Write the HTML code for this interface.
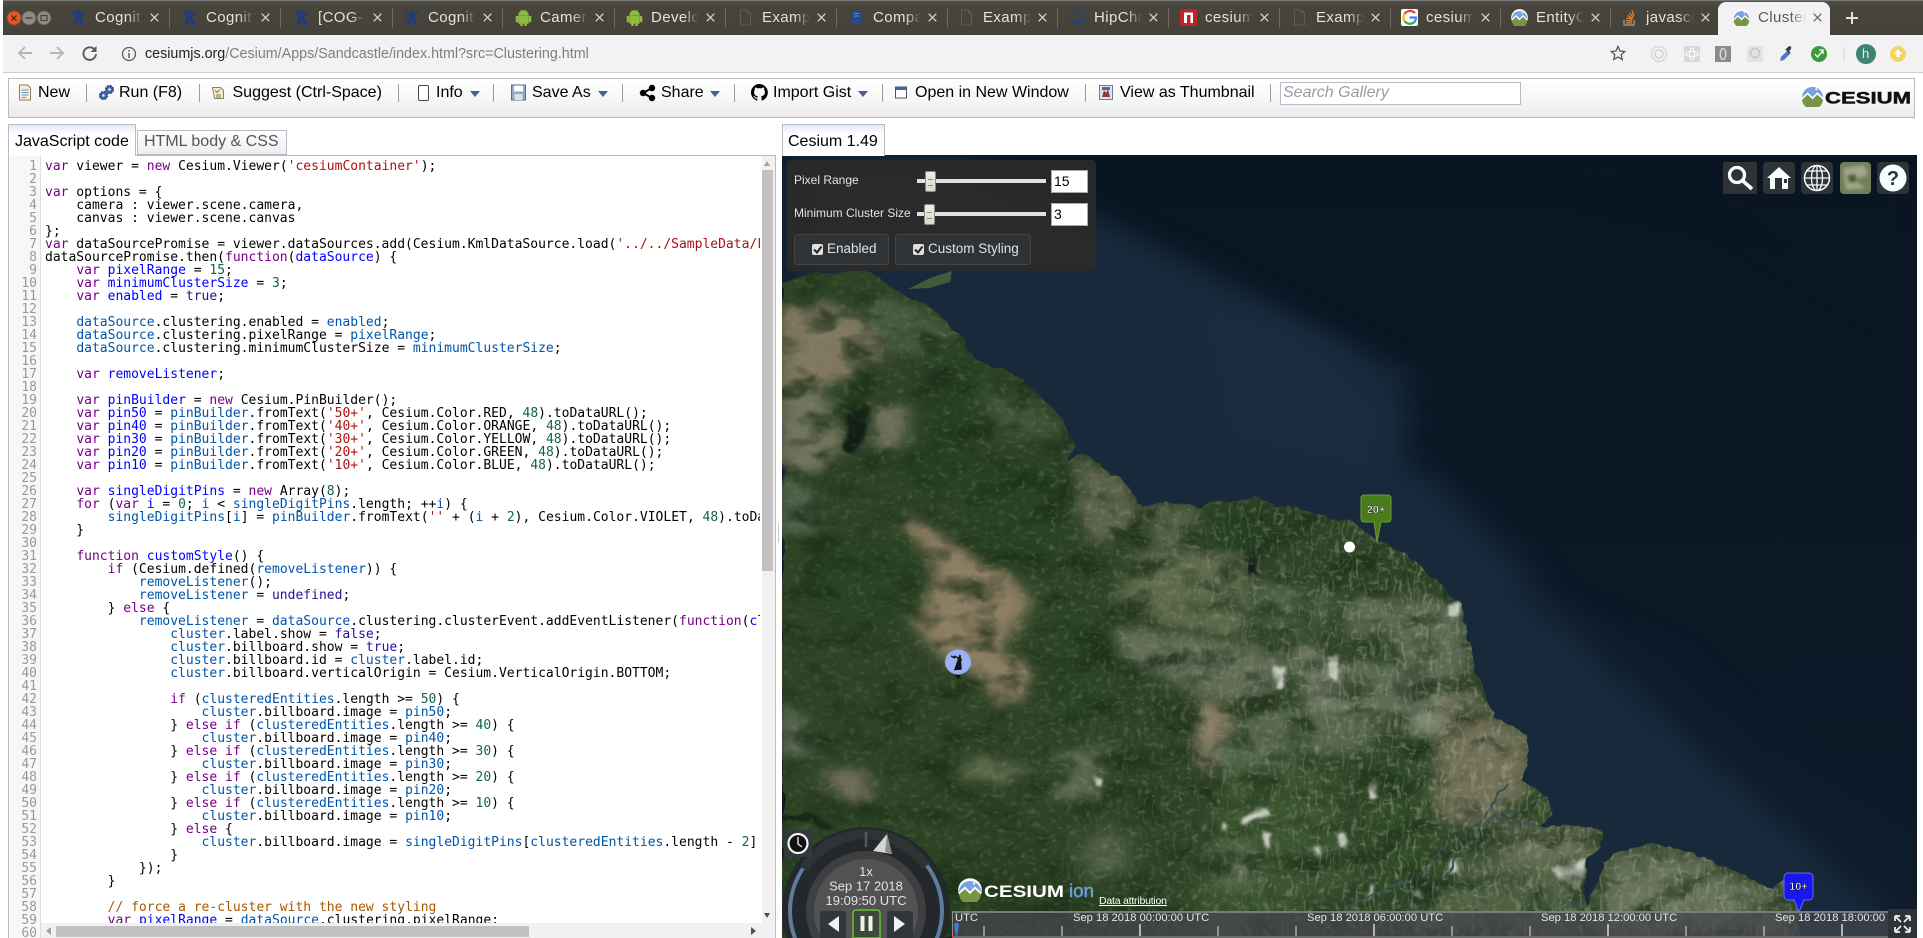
<!DOCTYPE html>
<html><head><meta charset="utf-8"><title>Cesium Sandcastle</title>
<style>
*{box-sizing:border-box}
html,body{margin:0;padding:0;width:1923px;height:938px;overflow:hidden;background:#fff;font-family:"Liberation Sans",sans-serif}
.a{position:absolute}
#tabbar{position:absolute;left:3px;top:0;width:1920px;height:35px;background:linear-gradient(#55524a,#47443c 20%,#45423a)}
.t{position:absolute;top:0;height:35px;width:111px;color:#e4e2dc;font-size:15px;letter-spacing:.4px}
.t svg.i{position:absolute;left:11px;top:9px;width:17px;height:17px}
.t span{position:absolute;left:36px;top:9px;width:48px;overflow:hidden;white-space:nowrap;line-height:18px;-webkit-mask-image:linear-gradient(to right,#000 68%,transparent);mask-image:linear-gradient(to right,#000 68%,transparent)}
.t svg.x{position:absolute;left:91px;top:13px;width:9px;height:9px}
.t i{position:absolute;right:0;top:8px;width:1px;height:20px;background:#6d6a62}
#addr{position:absolute;left:3px;top:35px;width:1920px;height:38px;background:#f2f2f2;border-bottom:1px solid #cdcdcd}
#tb{position:absolute;left:8px;top:78px;width:1907px;height:40px;border:1px solid #b5bcc7;background:linear-gradient(#fff,#f6f6f6 55%,#ebebeb)}
.tt{position:absolute;top:84px;font-size:16px;line-height:18px;color:#000;white-space:nowrap}
.sp{position:absolute;top:84px;width:1px;height:18px;background:#9b9b9b}
.ar{position:absolute;top:91px;width:0;height:0;border-left:5px solid transparent;border-right:5px solid transparent;border-top:6px solid #47628f}
.tab{position:absolute;font-size:16px;line-height:20px;white-space:nowrap;border:1px solid #b5bcc7}
#ed{position:absolute;left:8px;top:155px;width:768px;height:783px;border:1px solid #b5bcc7;border-bottom:0;background:#fff}
#gut{position:absolute;left:9px;top:156px;width:32px;height:782px;background:#f7f7f7;border-right:1px solid #ddd}
#nums{position:absolute;left:9px;top:160px;width:28px;height:778px;overflow:hidden;text-align:right;color:#999}
#nums,#code{font:13px/13px "DejaVu Sans Mono",monospace;white-space:pre;margin:0}
#clip{position:absolute;left:41px;top:156px;width:719px;height:767px;overflow:hidden}
#code{position:absolute;left:4px;top:4px;color:#000}
b{font-weight:400}
.k{color:#708}.d{color:#00f}.v{color:#05a}.s{color:#a11}.n{color:#164}.c{color:#a50}.u{color:#219}
.cb{position:absolute;background:#303336;border:1px solid #444;border-radius:3px;color:#edffff}
.lb{position:absolute;font-size:12px;color:#e2e2e2;line-height:16px;white-space:nowrap}
.th{position:absolute;width:11px;height:21px;background:linear-gradient(#efece6,#dcd8cf);border:1px solid #8d8a83;border-radius:2px}
.th:after{content:"";position:absolute;left:2px;top:7px;width:5px;height:5px;border-top:1px solid #888;border-bottom:1px solid #888}
.tr{position:absolute;left:917px;width:129px;height:4px;background:#e4e0d8}
.inp{position:absolute;left:1051px;width:37px;background:#fff;border:1px solid #aaa;color:#000;font-size:14px;padding-left:2px;line-height:21px}
.tl{position:absolute;top:911px;font-size:11.2px;line-height:15px;color:#e6e6e6;white-space:nowrap}
</style></head>
<body>

<svg width="0" height="0" style="position:absolute">
<defs>
<symbol id="jira" viewBox="0 0 17 17"><circle cx="8.5" cy="3.6" r="2.3" fill="#1d3d80"/><path d="M1.5 2.5 6 8 2.5 16h3.4L8.5 11l2.6 5h3.4L11 8l4.5-5.500-2-.8L9.7 6.500H7.3L3.5 1.700z" fill="#1d3d80"/></symbol>
<symbol id="and" viewBox="0 0 17 17"><path d="M3.5 6.500a5 5 0 0 1 10 0zM3.5 7.300h10v6.200a1 1 0 0 1-1 1h-1v2.500H9.500v-2.500h-2v2.500H5.500v-2.500h-1a1 1 0 0 1-1-1zM1 7.300h1.700v5.500H1zM14.300 7.300H16v5.500h-1.700zM5.500 .5l1.500 2.500M11.500 .5 10 3" fill="#8fbb3f" stroke="#8fbb3f" stroke-width=".6"/></symbol>
<symbol id="file" viewBox="0 0 17 17"><path d="M3.500 1h7l3 3v12h-10zM10.500 1v3h3" fill="none" stroke="#5f5c54"/></symbol>
<symbol id="comp" viewBox="0 0 17 17"><path d="M4 2.500Q8.500 .5 13 2.500V14Q8.500 16.500 4 14z" fill="#234a8e"/><path d="M6 4.500h5M6 7h5" stroke="#6e8fc2"/></symbol>
<symbol id="hip" viewBox="0 0 17 17"><circle cx="8.500" cy="8" r="6.500" fill="none" stroke="#27417c" stroke-width="1.800"/><path d="M5.500 10.500Q8.500 12.500 11.500 10.500M11 14l3 2" stroke="#27417c" stroke-width="1.500" fill="none"/></symbol>
<symbol id="npm" viewBox="0 0 17 17"><rect width="17" height="17" fill="#c12127"/><path d="M4 3.500h9V14h-2.500V6H7v8H4z" fill="#fff"/></symbol>
<symbol id="goog" viewBox="0 0 17 17"><rect width="17" height="17" rx="2" fill="#fff"/><path d="M14 4.200A6.500 6.500 0 0 0 3.500 5" fill="none" stroke="#ea4335" stroke-width="2.200"/><path d="M3.500 5a6.500 6.500 0 0 0 0 7" fill="none" stroke="#fbbc05" stroke-width="2.200"/><path d="M3.500 12A6.500 6.500 0 0 0 13.500 12.800" fill="none" stroke="#34a853" stroke-width="2.200"/><path d="M13.500 12.800c1-1 1.500-2.300 1.500-4.300H8.500" fill="none" stroke="#4285f4" stroke-width="2.200"/></symbol>
<symbol id="ces" viewBox="0 0 24 24"><circle cx="12" cy="12" r="11.800" fill="#fff"/><path d="M1 14A11 11 0 1 1 23 14z" fill="#78a3de"/><path d="M1 15.500 7 10l5 5 5-5 6 5.500A11 11 0 0 1 1 15.500z" fill="#7a9445"/><path d="M.8 15.500 7 9.800l5 5 5-5 6.200 5.700" fill="none" stroke="#fff" stroke-width="1.800"/><circle cx="16" cy="5.500" r="1.100" fill="#fff"/></symbol>
<symbol id="so" viewBox="0 0 17 17"><path d="M3 11v5h10v-5" fill="none" stroke="#a9a49a" stroke-width="1.200"/><path d="M5 14h6M5 11.500l6 .8M5.500 9l5.800 1.600M6.500 6.500l5.200 3M8.500 4l4 4.500M11 1.500l1.800 5.500" stroke="#e8822b" stroke-width="1.300" fill="none"/></symbol>
<symbol id="xx" viewBox="0 0 9 9"><path d="M.7.7l7.600 7.600M8.300.7.700 8.300" stroke="#d6d4ce" stroke-width="1.300" fill="none"/></symbol>
</defs>
</svg>

<!-- tab strip -->
<div id="tabbar"></div>
<div class="a" style="left:0;top:0;width:1923px;height:1px;background:#777"></div>
<svg class="a" style="left:5px;top:8px" width="48" height="20">
<circle cx="9" cy="10" r="7" fill="#e0582b" stroke="#8a4a30"/><path d="M6.500 7.500l5 5M11.500 7.500l-5 5" stroke="#57200e" stroke-width="1.200"/>
<circle cx="24" cy="10" r="7" fill="#8f8c84" stroke="#5b5951"/><path d="M20.500 10h7" stroke="#46443d" stroke-width="1.500"/>
<circle cx="39" cy="10" r="7" fill="#8f8c84" stroke="#5b5951"/><rect x="36" y="7.500" width="6" height="5" fill="none" stroke="#46443d" stroke-width="1.200"/>
</svg>
<div class="t" style="left:59px"><svg class="i"><use href="#jira"/></svg><span>Cognit</span><svg class="x"><use href="#xx"/></svg><i></i></div>
<div class="t" style="left:170px"><svg class="i"><use href="#jira"/></svg><span>Cognit</span><svg class="x"><use href="#xx"/></svg><i></i></div>
<div class="t" style="left:282px"><svg class="i"><use href="#jira"/></svg><span>[COG-1</span><svg class="x"><use href="#xx"/></svg><i></i></div>
<div class="t" style="left:392px"><svg class="i"><use href="#jira"/></svg><span>Cognit</span><svg class="x"><use href="#xx"/></svg><i></i></div>
<div class="t" style="left:504px"><svg class="i"><use href="#and"/></svg><span>Camera</span><svg class="x"><use href="#xx"/></svg><i></i></div>
<div class="t" style="left:615px"><svg class="i"><use href="#and"/></svg><span>Develo</span><svg class="x"><use href="#xx"/></svg><i></i></div>
<div class="t" style="left:726px"><svg class="i"><use href="#file"/></svg><span>Examp</span><svg class="x"><use href="#xx"/></svg><i></i></div>
<div class="t" style="left:837px"><svg class="i"><use href="#comp"/></svg><span>Compa</span><svg class="x"><use href="#xx"/></svg><i></i></div>
<div class="t" style="left:947px"><svg class="i"><use href="#file"/></svg><span>Examp</span><svg class="x"><use href="#xx"/></svg><i></i></div>
<div class="t" style="left:1058px"><svg class="i"><use href="#hip"/></svg><span>HipCha</span><svg class="x"><use href="#xx"/></svg><i></i></div>
<div class="t" style="left:1169px"><svg class="i"><use href="#npm"/></svg><span>cesium</span><svg class="x"><use href="#xx"/></svg><i></i></div>
<div class="t" style="left:1280px"><svg class="i"><use href="#file"/></svg><span>Examp</span><svg class="x"><use href="#xx"/></svg><i></i></div>
<div class="t" style="left:1390px"><svg class="i"><use href="#goog"/></svg><span>cesium</span><svg class="x"><use href="#xx"/></svg><i></i></div>
<div class="t" style="left:1500px"><svg class="i"><use href="#ces"/></svg><span>EntityC</span><svg class="x"><use href="#xx"/></svg><i></i></div>
<div class="t" style="left:1610px"><svg class="i"><use href="#so"/></svg><span>javascr</span><svg class="x"><use href="#xx"/></svg></div>
<div class="a" style="left:1718px;top:2px;width:112px;height:33px;background:#f2f2f2;border-radius:8px 8px 0 0"></div>
<div class="t" style="left:1722px;color:#5a5a5a"><svg class="i"><use href="#ces"/></svg><span>Cluster</span><svg class="x" viewBox="0 0 9 9"><path d="M.7.7l7.600 7.600M8.300.7.700 8.300" stroke="#666" stroke-width="1.300"/></svg></div>
<svg class="a" style="left:1845px;top:11px" width="14" height="14"><path d="M7 1v12M1 7h12" stroke="#e4e2dc" stroke-width="2"/></svg>

<!-- address bar -->
<div id="addr"></div>
<div class="a" style="left:0;top:0;width:3px;height:938px;background:#fff"></div>
<svg class="a" style="left:16px;top:44px" width="90" height="18">
<path d="M16 9H3M9 3 3 9l6 6" fill="none" stroke="#b6b6b6" stroke-width="1.900"/>
<path d="M34 9h13M41 3l6 6-6 6" fill="none" stroke="#b6b6b6" stroke-width="1.900"/>
<path d="M78.500 5.500A6.300 6.300 0 1 0 80 10" fill="none" stroke="#5a5a5a" stroke-width="1.900"/><path d="M80.500 2v6h-6z" fill="#5a5a5a"/>
</svg>
<svg class="a" style="left:121px;top:46px" width="16" height="16"><circle cx="8" cy="8" r="6.500" fill="none" stroke="#5c5c5c" stroke-width="1.300"/><path d="M8 7v5M8 4v1.600" stroke="#5c5c5c" stroke-width="1.500"/></svg>
<div class="a" style="left:145px;top:45px;font-size:14.3px;line-height:18px;color:#7a7f86;white-space:nowrap"><span style="color:#222">cesiumjs.org</span>/Cesium/Apps/Sandcastle/index.html?src=Clustering.html</div>
<svg class="a" style="left:1610px;top:45px" width="16" height="16"><path d="M8 1.500 10 6l4.800.5L11.200 9.700l1 4.800L8 12l-4.200 2.500 1-4.800L1.200 6.500 6 6z" fill="none" stroke="#555" stroke-width="1.300"/></svg>
<svg class="a" style="left:1650px;top:44px" width="260" height="20">
<circle cx="9" cy="10" r="7.500" fill="none" stroke="#d9d9d9" stroke-width="1.500"/><circle cx="9" cy="10" r="4" fill="none" stroke="#d0d0d0" stroke-width="1.500"/>
<rect x="34" y="2" width="16" height="16" fill="#d8d8d8"/><ellipse cx="42" cy="10" rx="6.500" ry="2.500" fill="none" stroke="#fff"/><ellipse cx="42" cy="10" rx="2.500" ry="6" fill="none" stroke="#fff"/>
<rect x="65" y="2" width="16" height="16" fill="#8a8a8a"/><ellipse cx="73" cy="10" rx="2.800" ry="5.500" fill="none" stroke="#d8d8d8" stroke-width="1.500"/>
<rect x="97" y="2" width="16" height="16" fill="#e4e4e4"/><circle cx="105" cy="9" r="4.500" fill="none" stroke="#c6c6c6" stroke-width="1.500"/>
<path d="M130 17l1-4 7-7 3 3-7 7z" fill="#5577cc"/><path d="M136 5l2-2c2-2 4 0 3 2l-2 2 1 1-1 1-4-4z" fill="#3a3a3a"/>
<circle cx="169" cy="10" r="8" fill="#3d9a3d"/><path d="M165 10l2.500 3 5-6M169 6h4v4" fill="none" stroke="#fff" stroke-width="1.300"/>
<path d="M194 3v14" stroke="#d3d3d3"/>
<circle cx="216" cy="10" r="10" fill="#3f8373"/>
<circle cx="248" cy="10" r="8" fill="#f4d469"/><path d="M248 5l4 5h-2.500v3h-3v-3H244z" fill="#fff"/>
</svg>
<div class="a" style="left:1862px;top:46px;color:#e6f0ee;font-size:13px;line-height:16px">h</div>

<!-- toolbar -->
<div id="tb"></div>
<svg class="a" style="left:18px;top:84px" width="14" height="17"><path d="M1.500 1h8l3 3v12h-11z" fill="#f6f1dc" stroke="#8d8157"/><path d="M3.500 6h7M3.500 8.500h7M3.500 11h7M3.500 13.500h5" stroke="#6b93cc"/></svg>
<div class="tt" style="left:38px">New</div><div class="sp" style="left:86px"></div>
<svg class="a" style="left:98px;top:84px" width="17" height="17"><circle cx="5.500" cy="11.500" r="3.800" fill="#3f68ad" stroke="#213f78" stroke-dasharray="2 1" stroke-width="1.600"/><circle cx="11.500" cy="5.500" r="3.800" fill="#3f68ad" stroke="#213f78" stroke-dasharray="2 1" stroke-width="1.600"/><circle cx="5.500" cy="11.500" r="1.200" fill="#fff"/><circle cx="11.500" cy="5.500" r="1.200" fill="#fff"/></svg>
<div class="tt" style="left:119px">Run (F8)</div><div class="sp" style="left:199px"></div>
<svg class="a" style="left:211px;top:85px" width="15" height="15"><path d="M1.500 2.500h8l3 3v8h-9z" fill="#f4eecf" stroke="#8b8256"/><path d="M4 5l2 2.500 3-3M5 10h5M5 12h5" stroke="#7f7a5a" fill="none"/></svg>
<div class="tt" style="left:232.5px">Suggest (Ctrl-Space)</div><div class="sp" style="left:398px"></div>
<svg class="a" style="left:417px;top:84px" width="13" height="18"><rect x="1.500" y="1.500" width="10" height="15" rx="1.500" fill="#fff" stroke="#444"/></svg>
<div class="tt" style="left:436px">Info</div><div class="ar" style="left:470px"></div><div class="sp" style="left:493px"></div>
<svg class="a" style="left:511px;top:84px" width="16" height="17"><rect x=".5" y="1" width="14" height="15" fill="#8ea9d0" stroke="#546d97"/><rect x="3" y="1.500" width="9" height="6" fill="#fff"/><rect x="3.500" y="10" width="8" height="6" fill="#e0e0e0"/></svg>
<div class="tt" style="left:532px">Save As</div><div class="ar" style="left:598px"></div><div class="sp" style="left:622px"></div>
<svg class="a" style="left:639px;top:84px" width="17" height="18"><path d="M13 4 4 9l9 5" fill="none" stroke="#000" stroke-width="2"/><circle cx="13" cy="4" r="3.200"/><circle cx="4" cy="9" r="3.200"/><circle cx="13" cy="14" r="3.200"/></svg>
<div class="tt" style="left:661px">Share</div><div class="ar" style="left:710px"></div><div class="sp" style="left:734px"></div>
<svg class="a" style="left:751px;top:84px" width="17" height="17" viewBox="0 0 16 16"><path d="M8 0a8 8 0 0 0-2.500 15.600c.4.100.5-.2.500-.4v-1.400c-2.200.5-2.700-1-2.700-1-.4-.9-.9-1.200-.9-1.200-.7-.5.100-.5.100-.5.800.1 1.200.8 1.200.8.700 1.200 1.900.9 2.300.7.100-.5.300-.9.500-1.100-1.800-.2-3.600-.9-3.600-4 0-.9.300-1.600.8-2.100-.1-.2-.4-1 .1-2.100 0 0 .7-.2 2.200.8a7.600 7.600 0 0 1 4 0c1.500-1 2.200-.8 2.200-.8.400 1.100.2 1.900.1 2.100.5.600.8 1.300.8 2.100 0 3.100-1.900 3.700-3.700 3.900.3.300.6.800.6 1.500v2.200c0 .2.100.5.600.4A8 8 0 0 0 8 0z"/></svg>
<div class="tt" style="left:773px">Import Gist</div><div class="ar" style="left:858px"></div><div class="sp" style="left:882px"></div>
<svg class="a" style="left:895px;top:86px" width="13" height="14"><rect x=".5" y="1" width="11" height="11" fill="#fff" stroke="#44576f"/><rect x="1" y="1" width="10" height="3" fill="#3a6aa8"/></svg>
<div class="tt" style="left:915px">Open in New Window</div><div class="sp" style="left:1085px"></div>
<svg class="a" style="left:1099px;top:85px" width="14" height="15"><rect x=".5" y=".5" width="13" height="14" fill="#dfe6f0" stroke="#6b7f9c"/><path d="M3 12l2-7 2 3 2-4 2 8z" fill="#8d3a3a"/><rect x="3" y="2" width="8" height="3" fill="#4a6da8"/></svg>
<div class="tt" style="left:1120px">View as Thumbnail</div><div class="sp" style="left:1270px"></div>
<div class="a" style="left:1280px;top:82px;width:241px;height:23px;background:#fff;border:1px solid #b5bcc7;font-style:italic;font-size:16px;line-height:19px;color:#9c9c9c;padding-left:2px">Search Gallery</div>
<svg class="a" style="left:1800px;top:84px" width="115" height="26">
<use href="#ces" x="1" y="0" width="23" height="23"/>
<text x="25" y="19.500" font-family="Liberation Sans" font-weight="700" font-size="17" textLength="86" lengthAdjust="spacingAndGlyphs" fill="#111" stroke="#111" stroke-width=".5">CESIUM</text>
</svg>

<!-- panel tabs -->
<div class="tab" style="left:8px;top:124px;width:128px;height:32px;padding:7px 0 0 6px;background:linear-gradient(#dfe9f9,#fff 9px);border-bottom:0;color:#000;z-index:3">JavaScript code</div>
<div class="tab" style="left:137px;top:130px;width:150px;height:25px;padding:1px 0 0 6px;background:linear-gradient(#fff,#eeeeee);color:#555">HTML body &amp; CSS</div>

<div id="ed"></div>
<div id="gut"></div>
<pre id="nums">1
2
3
4
5
6
7
8
9
10
11
12
13
14
15
16
17
18
19
20
21
22
23
24
25
26
27
28
29
30
31
32
33
34
35
36
37
38
39
40
41
42
43
44
45
46
47
48
49
50
51
52
53
54
55
56
57
58
59
60</pre>
<div id="clip"><pre id="code"><b class="k">var</b> viewer = <b class="k">new</b> Cesium.Viewer(<b class="s">'cesiumContainer'</b>);

<b class="k">var</b> options = {
    camera : viewer.scene.camera,
    canvas : viewer.scene.canvas
};
<b class="k">var</b> dataSourcePromise = viewer.dataSources.add(Cesium.KmlDataSource.load(<b class="s">'../../SampleData/kml/facilities/facilities.kml'</b>, options));
dataSourcePromise.then(<b class="k">function</b>(<b class="d">dataSource</b>) {
    <b class="k">var</b> <b class="d">pixelRange</b> = <b class="n">15</b>;
    <b class="k">var</b> <b class="d">minimumClusterSize</b> = <b class="n">3</b>;
    <b class="k">var</b> <b class="d">enabled</b> = <b class="u">true</b>;

    <b class="v">dataSource</b>.clustering.enabled = <b class="v">enabled</b>;
    <b class="v">dataSource</b>.clustering.pixelRange = <b class="v">pixelRange</b>;
    <b class="v">dataSource</b>.clustering.minimumClusterSize = <b class="v">minimumClusterSize</b>;

    <b class="k">var</b> <b class="d">removeListener</b>;

    <b class="k">var</b> <b class="d">pinBuilder</b> = <b class="k">new</b> Cesium.PinBuilder();
    <b class="k">var</b> <b class="d">pin50</b> = <b class="v">pinBuilder</b>.fromText(<b class="s">'50+'</b>, Cesium.Color.RED, <b class="n">48</b>).toDataURL();
    <b class="k">var</b> <b class="d">pin40</b> = <b class="v">pinBuilder</b>.fromText(<b class="s">'40+'</b>, Cesium.Color.ORANGE, <b class="n">48</b>).toDataURL();
    <b class="k">var</b> <b class="d">pin30</b> = <b class="v">pinBuilder</b>.fromText(<b class="s">'30+'</b>, Cesium.Color.YELLOW, <b class="n">48</b>).toDataURL();
    <b class="k">var</b> <b class="d">pin20</b> = <b class="v">pinBuilder</b>.fromText(<b class="s">'20+'</b>, Cesium.Color.GREEN, <b class="n">48</b>).toDataURL();
    <b class="k">var</b> <b class="d">pin10</b> = <b class="v">pinBuilder</b>.fromText(<b class="s">'10+'</b>, Cesium.Color.BLUE, <b class="n">48</b>).toDataURL();

    <b class="k">var</b> <b class="d">singleDigitPins</b> = <b class="k">new</b> Array(<b class="n">8</b>);
    <b class="k">for</b> (<b class="k">var</b> <b class="d">i</b> = <b class="n">0</b>; <b class="v">i</b> &lt; <b class="v">singleDigitPins</b>.length; ++<b class="v">i</b>) {
        <b class="v">singleDigitPins</b>[<b class="v">i</b>] = <b class="v">pinBuilder</b>.fromText(<b class="s">''</b> + (<b class="v">i</b> + <b class="n">2</b>), Cesium.Color.VIOLET, <b class="n">48</b>).toDataURL();
    }

    <b class="k">function</b> <b class="d">customStyle</b>() {
        <b class="k">if</b> (Cesium.defined(<b class="v">removeListener</b>)) {
            <b class="v">removeListener</b>();
            <b class="v">removeListener</b> = <b class="u">undefined</b>;
        } <b class="k">else</b> {
            <b class="v">removeListener</b> = <b class="v">dataSource</b>.clustering.clusterEvent.addEventListener(<b class="k">function</b>(<b class="d">clusteredEntities</b>, <b class="d">cluster</b>) {
                <b class="v">cluster</b>.label.show = <b class="u">false</b>;
                <b class="v">cluster</b>.billboard.show = <b class="u">true</b>;
                <b class="v">cluster</b>.billboard.id = <b class="v">cluster</b>.label.id;
                <b class="v">cluster</b>.billboard.verticalOrigin = Cesium.VerticalOrigin.BOTTOM;

                <b class="k">if</b> (<b class="v">clusteredEntities</b>.length &gt;= <b class="n">50</b>) {
                    <b class="v">cluster</b>.billboard.image = <b class="v">pin50</b>;
                } <b class="k">else</b> <b class="k">if</b> (<b class="v">clusteredEntities</b>.length &gt;= <b class="n">40</b>) {
                    <b class="v">cluster</b>.billboard.image = <b class="v">pin40</b>;
                } <b class="k">else</b> <b class="k">if</b> (<b class="v">clusteredEntities</b>.length &gt;= <b class="n">30</b>) {
                    <b class="v">cluster</b>.billboard.image = <b class="v">pin30</b>;
                } <b class="k">else</b> <b class="k">if</b> (<b class="v">clusteredEntities</b>.length &gt;= <b class="n">20</b>) {
                    <b class="v">cluster</b>.billboard.image = <b class="v">pin20</b>;
                } <b class="k">else</b> <b class="k">if</b> (<b class="v">clusteredEntities</b>.length &gt;= <b class="n">10</b>) {
                    <b class="v">cluster</b>.billboard.image = <b class="v">pin10</b>;
                } <b class="k">else</b> {
                    <b class="v">cluster</b>.billboard.image = <b class="v">singleDigitPins</b>[<b class="v">clusteredEntities</b>.length - <b class="n">2</b>];
                }
            });
        }

        <b class="c">// force a re-cluster with the new styling</b>
        <b class="k">var</b> <b class="d">pixelRange</b> = <b class="v">dataSource</b>.clustering.pixelRange;</pre></div>

<!-- editor scrollbars -->
<div class="a" style="left:762px;top:156px;width:13px;height:767px;background:#f1f1f1"></div>
<div class="a" style="left:762px;top:170px;width:11px;height:401px;background:#c1c1c1"></div>
<div class="a" style="left:764px;top:161px;width:0;height:0;border-left:3.5px solid transparent;border-right:3.5px solid transparent;border-bottom:5px solid #a3a3a3"></div>
<div class="a" style="left:764px;top:913px;width:0;height:0;border-left:3.5px solid transparent;border-right:3.5px solid transparent;border-top:5px solid #505050"></div>
<div class="a" style="left:41px;top:923px;width:734px;height:15px;background:#f1f1f1"></div>
<div class="a" style="left:56px;top:926px;width:473px;height:11px;background:#c1c1c1"></div>
<div class="a" style="left:46px;top:927px;width:0;height:0;border-top:4px solid transparent;border-bottom:4px solid transparent;border-right:5px solid #a3a3a3"></div>
<div class="a" style="left:751px;top:927px;width:0;height:0;border-top:4px solid transparent;border-bottom:4px solid transparent;border-left:5px solid #505050"></div>
<div class="a" style="left:778px;top:523px;width:1px;height:20px;background:#c8c8c8"></div>

<!-- map -->
<svg class="a" style="left:782px;top:155px" width="1135" height="783" viewBox="782 155 1135 783">
<defs>
<clipPath id="landclip"><path d="M780 283 809 273 868 271 897 291 941 314 963 340 978 361 1022 379 1058 413 1076 448 1067 463 1087 453 1117 478 1139 497 1142 505 1168 501 1201 509 1212 501 1256 500 1300 509 1351 524 1380 539 1417 562 1442 585 1461 601 1468 643 1483 685 1494 715 1527 735 1530 765 1520 780 1545 797 1553 813 1540 825 1603 828 1603 840 1589 860 1585 900 1590 905 1600 880 1603 860 1614 853 1652 843 1680 850 1740 873 1773 887 1784 877 1800 880 1800 938H780z"/></clipPath>
<filter id="b12" x="-30%" y="-30%" width="160%" height="160%" color-interpolation-filters="sRGB"><feGaussianBlur stdDeviation="12"/></filter>
<filter id="b20" x="-30%" y="-30%" width="160%" height="160%" color-interpolation-filters="sRGB"><feGaussianBlur stdDeviation="24"/></filter>
<filter id="b4" x="-30%" y="-30%" width="160%" height="160%" color-interpolation-filters="sRGB"><feGaussianBlur stdDeviation="3"/></filter>
<filter id="b2" x="-30%" y="-30%" width="160%" height="160%" color-interpolation-filters="sRGB"><feGaussianBlur stdDeviation="1.500"/></filter>
<filter id="n1" x="0" y="0" width="100%" height="100%" color-interpolation-filters="sRGB"><feTurbulence type="fractalNoise" baseFrequency=".14 .2" numOctaves="3" seed="5"/><feColorMatrix values="0 0 0 0 .78 0 0 0 0 .78 0 0 0 0 .66 2.500 2.500 0 0 -2.600"/></filter>
<filter id="n3" x="0" y="0" width="100%" height="100%" color-interpolation-filters="sRGB"><feTurbulence type="fractalNoise" baseFrequency=".3 .05" numOctaves="3" seed="21"/><feColorMatrix values="0 0 0 0 .75 0 0 0 0 .76 0 0 0 0 .68 3 3 0 0 -3.200"/></filter>
<filter id="n2" x="0" y="0" width="100%" height="100%" color-interpolation-filters="sRGB"><feTurbulence type="fractalNoise" baseFrequency=".025 .04" numOctaves="3" seed="11"/><feColorMatrix values="0 0 0 0 .1 0 0 0 0 .18 0 0 0 0 .09 2.200 2.200 0 0 -2.100"/></filter>
<filter id="jag" x="-2%" y="-2%" width="104%" height="104%" color-interpolation-filters="sRGB"><feTurbulence type="fractalNoise" baseFrequency=".045" numOctaves="3" seed="8" result="t"/><feDisplacementMap in="SourceGraphic" in2="t" scale="11" xChannelSelector="R" yChannelSelector="G"/></filter>
<linearGradient id="ocg" x1="0" y1="0" x2="0" y2="1"><stop offset="0" stop-color="#0a1522"/><stop offset="1" stop-color="#0d1a29"/></linearGradient>
<linearGradient id="spk" gradientUnits="userSpaceOnUse" x1="782" y1="0" x2="1450" y2="0"><stop offset="0" stop-color="#555"/><stop offset=".5" stop-color="#999"/><stop offset="1" stop-color="#fff"/></linearGradient>
<linearGradient id="sp2" gradientUnits="userSpaceOnUse" x1="1000" y1="0" x2="1400" y2="0"><stop offset="0" stop-color="#000"/><stop offset="1" stop-color="#fff"/></linearGradient>
<mask id="spm" maskUnits="userSpaceOnUse" x="782" y="155" width="1135" height="783"><rect x="782" y="155" width="1135" height="783" fill="url(#spk)"/></mask>
<mask id="spn" maskUnits="userSpaceOnUse" x="782" y="155" width="1135" height="783"><rect x="782" y="155" width="1135" height="783" fill="url(#sp2)"/></mask>
<pattern id="tk1" patternUnits="userSpaceOnUse" x="1140" y="0" width="9.750" height="40"><rect width="1" height="8" y="928" fill="#cfcfcf"/></pattern>
</defs>
<rect x="782" y="155" width="1135" height="783" fill="url(#ocg)"/>
<g transform="translate(780 260) scale(.732 .3827)">
<path d="M0-280H250L450-100 680 120 740 180 860 300 850 500 1000 760 1040 870 1130 1000 1240 1220 1460 1568 1600 1790H900L0 900z" fill="#17293b" filter="url(#b20)"/>
<path d="M880-280H1561V200L1300-100z" fill="#0b1624" opacity=".7" filter="url(#b20)"/>
<path d="M1020 850 1200 1000 1350 1250 1560 1500V1790H1560L1240 1220z" fill="#0f1c2c" opacity=".9" filter="url(#b20)"/>
<path d="M560 100 720 180 850 420 820 560 600 470z" fill="#1a2e41" opacity=".7" filter="url(#b20)"/>
</g>
<path d="M908 289 930 278 952 271 950 282 930 288z" fill="#3f5c38"/>
<g filter="url(#jag)"><g clip-path="url(#landclip)">
<rect x="782" y="155" width="1028" height="783" fill="#33492a"/>
<g transform="translate(780 260) scale(.732 .3827)">
<g filter="url(#b12)">
<path d="M0 130 80 110 140 190 130 270 60 340 0 360z" fill="#958870"/>
<path d="M90 90 170 110 230 170 240 260 150 240z" fill="#4f6648"/>
<path d="M0 350 60 350 90 500 60 550 0 540z" fill="#85856c"/>
<path d="M120 380 190 390 180 500 130 490z" fill="#828068"/>
<path d="M260 300 340 360 380 450 320 470 270 380z" fill="#48603f"/>
<path d="M170 650 230 730 300 800 345 890 300 1030 350 1060 345 1125 300 1170 270 1085 215 1030 180 945 210 860 205 780 170 710z" fill="#a58f74"/>
<path d="M400 520 470 570 490 680 430 760 400 640z" fill="#6c7059"/>
<path d="M480 770 640 760 635 980 530 960 460 900z" fill="#6c7758"/>
<path d="M500 640 570 650 560 780 510 770z" fill="#5e6d50"/>
<path d="M650 830 760 880 720 1000 640 980z" fill="#566b4c"/>
<path d="M780 870 930 900 950 1160 870 1220 800 1160 770 1010z" fill="#6a7860"/>
<path d="M450 960 630 1000 700 1050 660 1160 590 1150 470 1040z" fill="#717b65"/>
<path d="M700 1010 790 1010 770 1130 830 1180 830 1230 720 1170z" fill="#858c78"/>
<path d="M860 1130 950 1160 930 1240 860 1240z" fill="#98a08c"/>
<path d="M570 1140 610 1180 610 1240 590 1340 570 1320z" fill="#a8937a"/>
<path d="M610 1170 830 1180 800 1290 650 1300z" fill="#637458"/>
<path d="M590 1270 700 1290 690 1420 600 1380z" fill="#74826a"/>
<path d="M950 1250 1020 1250 1010 1400 920 1480 900 1400z" fill="#87866c"/>
<path d="M60 1320 120 1340 120 1420 70 1400z" fill="#837c66"/>
<path d="M0 560 60 620 40 720 0 720z" fill="#5c7058"/>
<path d="M0 1150 30 1200 50 1290 0 1300z" fill="#6c7a66"/>
<path d="M260 1290 340 1330 310 1370 250 1350z" fill="#6c7657"/>
<path d="M380 1290 450 1260 430 1420 370 1400z" fill="#66765c"/>
</g>
<g filter="url(#b12)" opacity=".85">
<path d="M200 200 280 260 270 500 210 640 160 560 180 380z" fill="#284425"/>
<path d="M240 560 390 500 400 700 340 830 260 760z" fill="#294627"/>
<path d="M20 720 190 730 170 900 140 1000 30 920z" fill="#2c4727"/>
<path d="M370 900 440 930 460 1130 400 1250 350 1150z" fill="#2e4a29"/>
<path d="M590 640 720 670 660 770 590 760z" fill="#264223"/>
<path d="M740 1000 830 960 840 1060 750 1050z" fill="#2b4523"/>
</g>
<path d="M92 390 120 380 120 440 102 510 85 490z" fill="#111a17" filter="url(#b4)"/>
<path d="M636 770 650 770 655 820 640 830z" fill="#10191a" filter="url(#b4)"/>
<path d="M0 1450 40 1445 75 1480 60 1490 30 1465H0z" fill="#17241c" filter="url(#b4)"/>
</g>
<!-- lower land, page coords -->
<g filter="url(#b12)">
<path d="M782 860H1130L1180 938H782z" fill="#2a4322"/>
<path d="M1220 760H1330L1360 880 1250 938H1190z" fill="#425d36"/>
<path d="M1360 760H1440L1430 880 1380 900z" fill="#34512c"/>
<path d="M1444 690 1530 730 1520 790 1470 830 1430 810z" fill="#857f66"/>
<path d="M1500 828 1603 828 1595 860 1550 880 1500 860z" fill="#85866e"/>
<path d="M1460 860 1580 860 1575 938H1400z" fill="#596c4c"/>
<path d="M1610 853 1680 850 1770 890 1800 938H1590z" fill="#78836a"/>
<path d="M1080 840 1120 830 1130 870 1090 880z" fill="#6a785e"/>
<path d="M1220 850 1245 850 1250 880 1225 880z" fill="#a0a490"/>
</g>
<g filter="url(#b2)" fill="#f3f3ec">
<path d="M1239 820 1270 806 1273 812 1245 826z"/><path d="M1222 822h6v8h-6z"/>
<path d="M1262 830 1272 834 1272 850 1264 845z"/><path d="M1340 832h8v16h-9z"/><path d="M1314 845h5v12h-6z"/>
<path d="M1370 780h7v18h-8z"/><path d="M1095 778h8v8h-8z"/>
<path d="M1552 868 1590 860 1585 875 1580 890 1560 880z"/><path d="M1449 862h9v10h-9z"/><path d="M1413 890h7v8h-7z"/><path d="M1368 885h4v14h-4z"/>
<path d="M1425 548 1430 550 1426 568 1421 566z"/><path d="M1450 602 1462 596 1458 616 1446 614z"/>
<path d="M1275 670 1285 668 1282 688 1274 686z"/><path d="M1330 655 1340 655 1335 685 1327 680z"/>
</g>
<path d="M1509 783 1470 830 1433 857 1427 873 1345 907 1330 925M1498 817 1460 853 1444 883 1400 925M1597 860 1586 900 1531 912 1470 935M1545 797 1510 812 1490 817M1540 825 1500 820" stroke="#3a5a62" stroke-width="2.500" fill="none"/>
<rect x="782" y="155" width="1028" height="783" filter="url(#n2)" opacity=".7"/>
<rect x="782" y="155" width="1028" height="783" filter="url(#n1)" opacity=".4" mask="url(#spm)"/>
<rect x="782" y="155" width="1028" height="783" filter="url(#n3)" opacity=".4" mask="url(#spn)"/>
<rect x="782" y="155" width="1028" height="783" fill="#1c2a14" opacity=".18"/>
</g></g>
<circle cx="1349.500" cy="547" r="5.500" fill="#fff"/>
<path d="M1364 495h24a3 3 0 0 1 3 3v21a3 3 0 0 1-3 3h-7l-4 20-3-20h-10a3 3 0 0 1-3-3v-21a3 3 0 0 1 3-3z" fill="#4a7c1c" stroke="#6d9a3e"/>
<text x="1376" y="513" text-anchor="middle" font-family="Liberation Sans" font-size="11" font-weight="700" fill="#fff" stroke="#111" stroke-width=".4">20+</text>
<ellipse cx="958" cy="662" rx="13" ry="12.500" fill="#9bb1f5"/><path d="M954 656l8 4M960 655l1 14-6 .5zM951 656l4 2" stroke="#111" stroke-width="1.500" fill="#111"/><path d="M955 675h6l-3 4z" fill="#111"/>
<path d="M1788 873h21a4 4 0 0 1 4 4v19a4 4 0 0 1-4 4h-5l-5 12-5-12h-6a4 4 0 0 1-4-4v-19a4 4 0 0 1 4-4z" fill="#1717ee" stroke="#5f6fe8"/>
<text x="1798.500" y="890" text-anchor="middle" font-family="Liberation Sans" font-size="11" font-weight="700" fill="#fff" stroke="#111" stroke-width=".5">10+</text>
<!-- timeline -->
<rect x="952" y="911" width="936" height="27" fill="#44464e" fill-opacity=".75"/>
<rect x="952" y="911" width="936" height="2" fill="#8a8a8a" fill-opacity=".8"/>
<rect x="952" y="911" width="1" height="27" fill="#8a8a8a"/>
<rect x="952" y="928" width="936" height="8" fill="url(#tk1)"/>
<path d="M1140 924v12M1374 924v12M1608 924v12M1842 924v12" stroke="#fff" stroke-width="1.200"/>
<path d="M984 926v10M1062 926v10M1218 926v10M1296 926v10M1452 926v10M1530 926v10M1686 926v10M1764 926v10" stroke="#ddd"/>
<path d="M954 925c0-3 5-3 5 0l-1 6-1 5h-1l-1-5z" fill="#4a78c8"/>
<rect x="952" y="936" width="936" height="2" fill="#6b6b6b"/>
<rect x="952" y="936" width="2" height="2" fill="#e33"/>
<rect x="1888" y="909" width="29" height="29" fill="#303336"/>
<path d="M1895 916l6 6M1895 916h5M1895 916v5M1910 916l-6 6M1910 916h-5M1910 916v5M1895 932l6-6M1895 932h5M1895 932v-5M1910 932l-6-6M1910 932h-5M1910 932v-5" stroke="#eef" stroke-width="1.700" fill="none"/>
<!-- animation widget -->
<circle cx="866" cy="911" r="84" fill="#23282a"/>
<circle cx="866" cy="911" r="76" fill="none" stroke="#5f7c9c" stroke-width="4"/>
<path d="M804 869a74 74 0 0 1 62-35 74 74 0 0 1 60 32" fill="none" stroke="#2e3436" stroke-width="10"/>
<circle cx="866" cy="911" r="68" fill="#23282a"/>
<circle cx="866" cy="911" r="60" fill="#3f3f41"/>
<circle cx="866" cy="911" r="52" fill="#525254"/>
<path d="M866 832v15" stroke="#4d5a66" stroke-width="2.500"/>
<path d="M873 851 887 834 892 854z" fill="#d5d5d3"/><path d="M887 834 892 854 885 852z" fill="#8d8d8b"/>
<path d="M820 914a3 3 0 0 1 3-3h20a3 3 0 0 1 3 3v24h-26zM887 914a3 3 0 0 1 3-3h20a3 3 0 0 1 3 3v24h-26z" fill="#31353c"/>
<path d="M856 910h21a3 3 0 0 1 3 3v25h-27v-25a3 3 0 0 1 3-3z" fill="#3d4a3b" stroke="#6cc230" stroke-width="1.400"/>
<path d="M828 924l11-8v16zM905 924l-11-8v16z" fill="#f2f2f2"/>
<rect x="860.500" y="916" width="4" height="15" fill="#f2f2f2"/><rect x="868.500" y="916" width="4" height="15" fill="#f2f2f2"/>
<text font-family="Liberation Sans" font-size="13" fill="#e3e3e3" text-anchor="middle"><tspan x="866" y="876">1x</tspan><tspan x="866" y="890.500">Sep 17 2018</tspan><tspan x="866" y="905">19:09:50 UTC</tspan></text>
<rect x="785" y="830" width="27" height="27" rx="3" fill="#33373e"/>
<circle cx="798" cy="843.500" r="9.500" fill="#111" stroke="#f4f4f4" stroke-width="2.200"/><path d="M798 837v7l4 3" stroke="#eee" stroke-width="1.400" fill="none"/>
<!-- ion logo -->
<use href="#ces" x="958" y="878" width="24" height="24"/>
<text x="984" y="897" font-family="Liberation Sans" font-size="17" font-weight="700" fill="#fff" textLength="80" lengthAdjust="spacingAndGlyphs">CESIUM</text>
<text x="1069" y="897" font-family="Liberation Sans" font-size="18" fill="#6f9ddb" stroke="#6f9ddb" stroke-width=".5" textLength="25" lengthAdjust="spacingAndGlyphs">ion</text>
<text x="1099" y="904" font-family="Liberation Sans" font-size="10.500" fill="#fff" text-decoration="underline" textLength="68">Data attribution</text>
<!-- top right toolbar -->
<rect x="1723" y="162" width="34" height="32" fill="#303336"/>
<circle cx="1737" cy="175" r="7.500" fill="none" stroke="#f5ffff" stroke-width="3.300"/><path d="M1743 181l9 8" stroke="#f5ffff" stroke-width="3.600"/>
<rect x="1763" y="162" width="32" height="32" rx="4" fill="#303336"/>
<path d="M1767 178l12-11 12 11h-3v11h-18v-11z" fill="#f5ffff"/><rect x="1775" y="178" width="7" height="11" fill="#303336"/><rect x="1784" y="179" width="3" height="4" fill="#303336"/>
<rect x="1801" y="162" width="32" height="32" rx="4" fill="#303336"/>
<circle cx="1817" cy="178" r="12.500" fill="none" stroke="#f5ffff" stroke-width="1.500"/><ellipse cx="1817" cy="178" rx="5.500" ry="12.500" fill="none" stroke="#f5ffff" stroke-width="1.300"/><path d="M1817 165.500v25M1804.500 178h25M1806 171h22M1806 185h22" stroke="#f5ffff" stroke-width="1.300"/>
<rect x="1840" y="162" width="31" height="32" rx="4" fill="#6f7f58"/><path d="M1843 168l22-3 3 10-14 5 12 8-20 2z" fill="#a2a68a" filter="url(#b2)"/><path d="M1847 176l8-2 2 7-7 2z" fill="#4c5c3b" filter="url(#b2)"/>
<rect x="1877" y="162" width="32" height="32" rx="4" fill="#303336"/>
<circle cx="1893" cy="178" r="13.500" fill="#f5ffff"/>
<text x="1893" y="185" text-anchor="middle" font-family="Liberation Sans" font-size="20" font-weight="700" fill="#303336">?</text>
</svg>
<div class="tl" style="left:955px">UTC</div>
<div class="tl" style="left:1073px">Sep 18 2018 00:00:00 UTC</div>
<div class="tl" style="left:1307px">Sep 18 2018 06:00:00 UTC</div>
<div class="tl" style="left:1541px">Sep 18 2018 12:00:00 UTC</div>
<div class="tl" style="left:1775px;width:111px;overflow:hidden">Sep 18 2018 18:00:00 UTC</div>

<div class="tab" style="left:782px;top:124px;width:103px;height:32px;padding:7px 0 0 5px;background:linear-gradient(#dfe9f9,#fff 9px);border-bottom:0;color:#000">Cesium 1.49</div>

<!-- sandcastle panel -->
<div class="a" style="left:787px;top:160px;width:309px;height:111px;background:rgba(42,42,42,.93);border-radius:4px"></div>
<div class="lb" style="left:794px;top:172px">Pixel Range</div>
<div class="lb" style="left:794px;top:205px">Minimum Cluster Size</div>
<div class="tr" style="top:179px"></div><div class="tr" style="top:212px"></div>
<div class="th" style="left:925px;top:171px"></div><div class="th" style="left:924px;top:204px"></div>
<div class="inp" style="top:170px;height:23px">15</div>
<div class="inp" style="top:203px;height:23px">3</div>
<div class="cb" style="left:794px;top:234px;width:95px;height:31px"></div>
<div class="cb" style="left:895px;top:234px;width:136px;height:31px"></div>
<svg class="a" style="left:811px;top:243px" width="14" height="14"><rect x="1" y="1" width="11" height="11" rx="2" fill="#e0e0e0"/><path d="M3 6.500l3 3 4.500-6" stroke="#222" stroke-width="2" fill="none"/></svg>
<svg class="a" style="left:912px;top:243px" width="14" height="14"><rect x="1" y="1" width="11" height="11" rx="2" fill="#e0e0e0"/><path d="M3 6.500l3 3 4.500-6" stroke="#222" stroke-width="2" fill="none"/></svg>
<div class="lb" style="left:827px;top:241px;font-size:13.5px">Enabled</div>
<div class="lb" style="left:928px;top:241px;font-size:13.5px">Custom Styling</div>

</body></html>
